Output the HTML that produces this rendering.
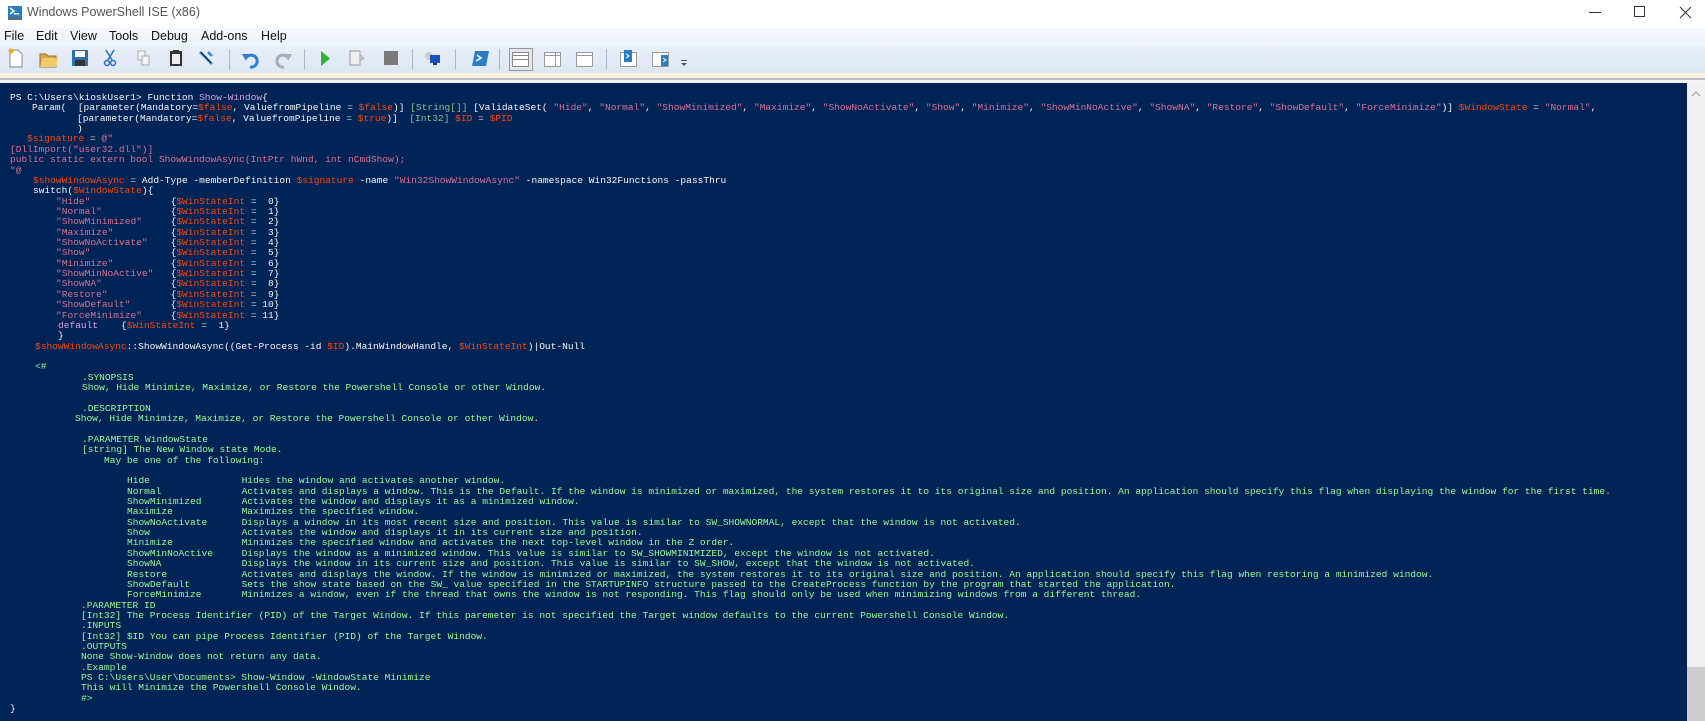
<!DOCTYPE html>
<html><head><meta charset="utf-8">
<style>
*{margin:0;padding:0;box-sizing:border-box}
body{width:1705px;height:721px;overflow:hidden;background:#fff;position:relative;font-family:"Liberation Sans",sans-serif}
#title{position:absolute;left:0;top:0;width:1705px;height:28px;background:#fff}
#title .t{position:absolute;left:27px;top:5px;font-size:12.5px;color:#555}
#menu{position:absolute;left:0;top:28px;width:1705px;height:18px;background:linear-gradient(#f5f8fc,#eef3fa)}
#menu span{position:absolute;top:1px;font-size:12.5px;color:#111}
#tb{position:absolute;left:0;top:46px;width:1705px;height:27px;background:linear-gradient(#e9eff8,#dce6f4)}
#beige{position:absolute;left:0;top:73px;width:1705px;height:5px;background:#fdf0e1}
#gl{position:absolute;left:0;top:78px;width:1705px;height:2px;background:#b7bcc4}
#wl{position:absolute;left:0;top:80px;width:1705px;height:3px;background:#f4f4f4}
#con{position:absolute;left:0;top:83px;width:1687px;height:638px;background:#012456;overflow:hidden}
#sb{position:absolute;left:1687px;top:83px;width:18px;height:638px;background:#f0f0f0}
#thumb{position:absolute;left:1687px;top:667px;width:18px;height:54px;background:#cdcdcd}
#code{position:absolute;left:0;top:10px;font-family:"Liberation Mono",monospace;font-size:9.55px;line-height:10.37px;color:#f5f5f5}
#code div{height:10.37px;white-space:pre}
.v{color:#ff4500}.s{color:#db7093}.t{color:#8fbc8f}.c{color:#98fb98}.p{color:#dda0dd}.o{color:#d3d3d3}
</style></head><body>
<div id="title">
<svg style="position:absolute;left:7px;top:5px" width="16" height="16" viewBox="0 0 16 16"><rect x="1" y="1" width="14" height="11" fill="#2a7fc4"/><path d="M3 3l4 3-4 3" stroke="#fff" stroke-width="1.5" fill="none"/><rect x="7" y="8" width="5" height="1.5" fill="#fff"/><rect x="1" y="12" width="14" height="3" fill="#5a6a7a"/></svg>
<span class="t">Windows PowerShell ISE (x86)</span>
<svg style="position:absolute;left:1588px;top:6px" width="110" height="14"><line x1="1" y1="6.5" x2="13" y2="6.5" stroke="#333"/><rect x="46.5" y="0.5" width="10" height="10" fill="none" stroke="#333"/><path d="M92 1l11 11M103 1l-11 11" stroke="#333"/></svg>
</div>
<div id="menu">
<span style="left:4px">File</span><span style="left:36px">Edit</span><span style="left:70px">View</span><span style="left:109px">Tools</span><span style="left:151px">Debug</span><span style="left:201px">Add-ons</span><span style="left:261px">Help</span>
</div>
<div id="tb">
<svg width="700" height="27" style="position:absolute;left:0;top:0">
<path d="M10 4h8l4 4v13H10z" fill="#fff" stroke="#888"/><circle cx="11" cy="5" r="2.5" fill="#f5a623"/>
<path d="M40 8h6l2 2h8v11H40z" fill="#d9a441" stroke="#a07020"/><path d="M42 12h16l-2 9H40z" fill="#f0c96a"/>
<rect x="72" y="4" width="16" height="16" fill="#2c6fb7"/><rect x="75" y="5" width="10" height="6" fill="#fff"/><rect x="75" y="14" width="10" height="6" fill="#333"/>
<path d="M106 4l6 10M114 4l-6 10" stroke="#2d6fc4" stroke-width="1.5"/><circle cx="107" cy="17" r="2.5" fill="none" stroke="#2d6fc4" stroke-width="1.5"/><circle cx="113" cy="17" r="2.5" fill="none" stroke="#2d6fc4" stroke-width="1.5"/>
<rect x="138" y="5" width="7" height="9" fill="#f4f4f4" stroke="#aaa"/><rect x="142" y="10" width="7" height="9" fill="#f4f4f4" stroke="#aaa"/>
<rect x="170" y="5" width="12" height="15" fill="#333"/><rect x="172" y="8" width="8" height="10" fill="#eee"/><rect x="173" y="4" width="6" height="3" fill="#333"/>
<path d="M200 6l12 12M208 6l4 4" stroke="#2d8ad4" stroke-width="2.5"/><path d="M201 6l10 11" stroke="#111" stroke-width="1"/>
<line x1="229.5" y1="3" x2="229.5" y2="24" stroke="#b0b8c4"/>
<path d="M246 12a6 6 0 1 1 4 9" stroke="#2d7fd0" stroke-width="3" fill="none"/><path d="M242 8l6 0l-2 7z" fill="#2d7fd0"/>
<path d="M288 12a6 6 0 1 0 -4 9" stroke="#aab" stroke-width="3" fill="none"/><path d="M292 8l-6 0l2 7z" fill="#aab"/>
<line x1="304.5" y1="3" x2="304.5" y2="24" stroke="#b0b8c4"/>
<path d="M321 5l9 7.5-9 7.5z" fill="#2bb530"/>
<rect x="350" y="5" width="10" height="14" fill="#eee" stroke="#999"/><path d="M360 8l5 4-5 4z" fill="#bbb"/>
<rect x="384" y="5" width="14" height="14" fill="#7a7a7a"/>
<line x1="412.5" y1="3" x2="412.5" y2="24" stroke="#b0b8c4"/>
<circle cx="429" cy="10" r="4" fill="#ccc"/><rect x="430" y="9" width="10" height="8" fill="#1d4fbf"/><rect x="433" y="17" width="4" height="2" fill="#333"/>
<line x1="455.5" y1="3" x2="455.5" y2="24" stroke="#b0b8c4"/>
<path d="M475 5h14l-3 15h-14z" fill="#2a7fc4"/><path d="M477 9l4 3-5 3" stroke="#fff" stroke-width="1.5" fill="none"/>
<line x1="499.5" y1="3" x2="499.5" y2="24" stroke="#b0b8c4"/>
<rect x="509.5" y="2.5" width="23" height="22" fill="#e4e8ee" stroke="#999"/>
<rect x="512.5" y="6.5" width="16" height="14" fill="#fff" stroke="#888"/><line x1="512" y1="13.5" x2="529" y2="13.5" stroke="#888"/><line x1="512" y1="9.5" x2="529" y2="9.5" stroke="#888"/>
<rect x="544.5" y="6.5" width="16" height="14" fill="#fff" stroke="#999"/><line x1="555.5" y1="7" x2="555.5" y2="20" stroke="#999"/><line x1="544" y1="9.5" x2="561" y2="9.5" stroke="#999"/>
<rect x="576.5" y="6.5" width="16" height="14" fill="#fff" stroke="#999"/><line x1="576" y1="9.5" x2="593" y2="9.5" stroke="#999"/>
<line x1="606.5" y1="3" x2="606.5" y2="24" stroke="#b0b8c4"/>
<rect x="620.5" y="6.5" width="16" height="14" fill="#fff" stroke="#999"/><rect x="624" y="4" width="8" height="12" fill="#2a7fc4"/><path d="M626 8l3 2-3 2" stroke="#fff" fill="none"/>
<rect x="652.5" y="6.5" width="16" height="14" fill="#fff" stroke="#999"/><rect x="661" y="9" width="7" height="11" fill="#2a7fc4"/><path d="M663 12l3 2-3 2" stroke="#fff" fill="none"/>
<rect x="681" y="14" width="6" height="1" fill="#555"/><path d="M681 17h6l-3 3z" fill="#555"/>
</svg>
</div>
<div id="beige"></div><div id="gl"></div><div id="wl"></div>
<div id="con"><div id="code"><div style="padding-left:10px">PS C:\Users\kioskUser1&gt; Function <span class="p">Show-Window</span>{</div><div style="padding-left:32px">Param(  [parameter(Mandatory=<span class="v">$false</span>, ValuefromPipeline <span class="o">=</span> <span class="v">$false</span>)] <span class="t">[String[]]</span> [ValidateSet( <span class="s">"Hide"</span>, <span class="s">"Normal"</span>, <span class="s">"ShowMinimized"</span>, <span class="s">"Maximize"</span>, <span class="s">"ShowNoActivate"</span>, <span class="s">"Show"</span>, <span class="s">"Minimize"</span>, <span class="s">"ShowMinNoActive"</span>, <span class="s">"ShowNA"</span>, <span class="s">"Restore"</span>, <span class="s">"ShowDefault"</span>, <span class="s">"ForceMinimize"</span>)] <span class="v">$WindowState</span> <span class="o">=</span> <span class="s">"Normal"</span>,</div><div style="padding-left:77px">[parameter(Mandatory=<span class="v">$false</span>, ValuefromPipeline <span class="o">=</span> <span class="v">$true</span>)]  <span class="t">[Int32]</span> <span class="v">$ID</span> <span class="o">=</span> <span class="v">$PID</span></div><div style="padding-left:77px">)</div><div style="padding-left:27px"><span class="v">$signature</span> <span class="o">=</span> <span class="s">@"</span></div><div style="padding-left:10px" class="s">[DllImport("user32.dll")]</div><div style="padding-left:10px" class="s">public static extern bool ShowWindowAsync(IntPtr hWnd, int nCmdShow);</div><div style="padding-left:10px" class="s">"@</div><div style="padding-left:33px"><span class="v">$showWindowAsync</span> <span class="o">=</span> Add-Type -memberDefinition <span class="v">$signature</span> -name <span class="s">"Win32ShowWindowAsync"</span> -namespace Win32Functions -passThru</div><div style="padding-left:33px">switch(<span class="v">$WindowState</span>){</div><div style="padding-left:56px"><span class="s">"Hide"</span>              {<span class="v">$WinStateInt</span> <span class="o">=</span>  0}</div><div style="padding-left:56px"><span class="s">"Normal"</span>            {<span class="v">$WinStateInt</span> <span class="o">=</span>  1}</div><div style="padding-left:56px"><span class="s">"ShowMinimized"</span>     {<span class="v">$WinStateInt</span> <span class="o">=</span>  2}</div><div style="padding-left:56px"><span class="s">"Maximize"</span>          {<span class="v">$WinStateInt</span> <span class="o">=</span>  3}</div><div style="padding-left:56px"><span class="s">"ShowNoActivate"</span>    {<span class="v">$WinStateInt</span> <span class="o">=</span>  4}</div><div style="padding-left:56px"><span class="s">"Show"</span>              {<span class="v">$WinStateInt</span> <span class="o">=</span>  5}</div><div style="padding-left:56px"><span class="s">"Minimize"</span>          {<span class="v">$WinStateInt</span> <span class="o">=</span>  6}</div><div style="padding-left:56px"><span class="s">"ShowMinNoActive"</span>   {<span class="v">$WinStateInt</span> <span class="o">=</span>  7}</div><div style="padding-left:56px"><span class="s">"ShowNA"</span>            {<span class="v">$WinStateInt</span> <span class="o">=</span>  8}</div><div style="padding-left:56px"><span class="s">"Restore"</span>           {<span class="v">$WinStateInt</span> <span class="o">=</span>  9}</div><div style="padding-left:56px"><span class="s">"ShowDefault"</span>       {<span class="v">$WinStateInt</span> <span class="o">=</span> 10}</div><div style="padding-left:56px"><span class="s">"ForceMinimize"</span>     {<span class="v">$WinStateInt</span> <span class="o">=</span> 11}</div><div style="padding-left:58px"><span class="p">default</span>    {<span class="v">$WinStateInt</span> <span class="o">=</span>  1}</div><div style="padding-left:58px">}</div><div style="padding-left:35px"><span class="v">$showWindowAsync</span>::ShowWindowAsync((Get-Process -id <span class="v">$ID</span>).MainWindowHandle, <span class="v">$WinStateInt</span>)|Out-Null</div><div></div><div style="padding-left:35px" class="c">&lt;#</div><div style="padding-left:82px" class="c">.SYNOPSIS</div><div style="padding-left:82px" class="c">Show, Hide Minimize, Maximize, or Restore the Powershell Console or other Window.</div><div></div><div style="padding-left:82px" class="c">.DESCRIPTION</div><div style="padding-left:75px" class="c">Show, Hide Minimize, Maximize, or Restore the Powershell Console or other Window.</div><div></div><div style="padding-left:82px" class="c">.PARAMETER WindowState</div><div style="padding-left:82px" class="c">[string] The New Window state Mode.</div><div style="padding-left:104px" class="c">May be one of the following:</div><div></div><div style="padding-left:127px" class="c">Hide                Hides the window and activates another window.</div><div style="padding-left:127px" class="c">Normal              Activates and displays a window. This is the Default. If the window is minimized or maximized, the system restores it to its original size and position. An application should specify this flag when displaying the window for the first time.</div><div style="padding-left:127px" class="c">ShowMinimized       Activates the window and displays it as a minimized window.</div><div style="padding-left:127px" class="c">Maximize            Maximizes the specified window.</div><div style="padding-left:127px" class="c">ShowNoActivate      Displays a window in its most recent size and position. This value is similar to SW_SHOWNORMAL, except that the window is not activated.</div><div style="padding-left:127px" class="c">Show                Activates the window and displays it in its current size and position.</div><div style="padding-left:127px" class="c">Minimize            Minimizes the specified window and activates the next top-level window in the Z order.</div><div style="padding-left:127px" class="c">ShowMinNoActive     Displays the window as a minimized window. This value is similar to SW_SHOWMINIMIZED, except the window is not activated.</div><div style="padding-left:127px" class="c">ShowNA              Displays the window in its current size and position. This value is similar to SW_SHOW, except that the window is not activated.</div><div style="padding-left:127px" class="c">Restore             Activates and displays the window. If the window is minimized or maximized, the system restores it to its original size and position. An application should specify this flag when restoring a minimized window.</div><div style="padding-left:127px" class="c">ShowDefault         Sets the show state based on the SW_ value specified in the STARTUPINFO structure passed to the CreateProcess function by the program that started the application.</div><div style="padding-left:127px" class="c">ForceMinimize       Minimizes a window, even if the thread that owns the window is not responding. This flag should only be used when minimizing windows from a different thread.</div><div style="padding-left:81px" class="c">.PARAMETER ID</div><div style="padding-left:81px" class="c">[Int32] The Process Identifier (PID) of the Target Window. If this paremeter is not specified the Target window defaults to the current Powershell Console Window.</div><div style="padding-left:81px" class="c">.INPUTS</div><div style="padding-left:81px" class="c">[Int32] $ID You can pipe Process Identifier (PID) of the Target Window.</div><div style="padding-left:81px" class="c">.OUTPUTS</div><div style="padding-left:81px" class="c">None Show-Window does not return any data.</div><div style="padding-left:81px" class="c">.Example</div><div style="padding-left:81px" class="c">PS C:\Users\User\Documents&gt; Show-Window -WindowState Minimize</div><div style="padding-left:81px" class="c">This will Minimize the Powershell Console Window.</div><div style="padding-left:81px" class="c">#&gt;</div><div style="padding-left:10px">}</div></div></div>
<div id="sb"><svg width="18" height="18" style="position:absolute;left:0;top:2px"><path d="M5 11l4-4 4 4" stroke="#999" fill="none"/></svg></div>
<div id="thumb"></div>
</body></html>
